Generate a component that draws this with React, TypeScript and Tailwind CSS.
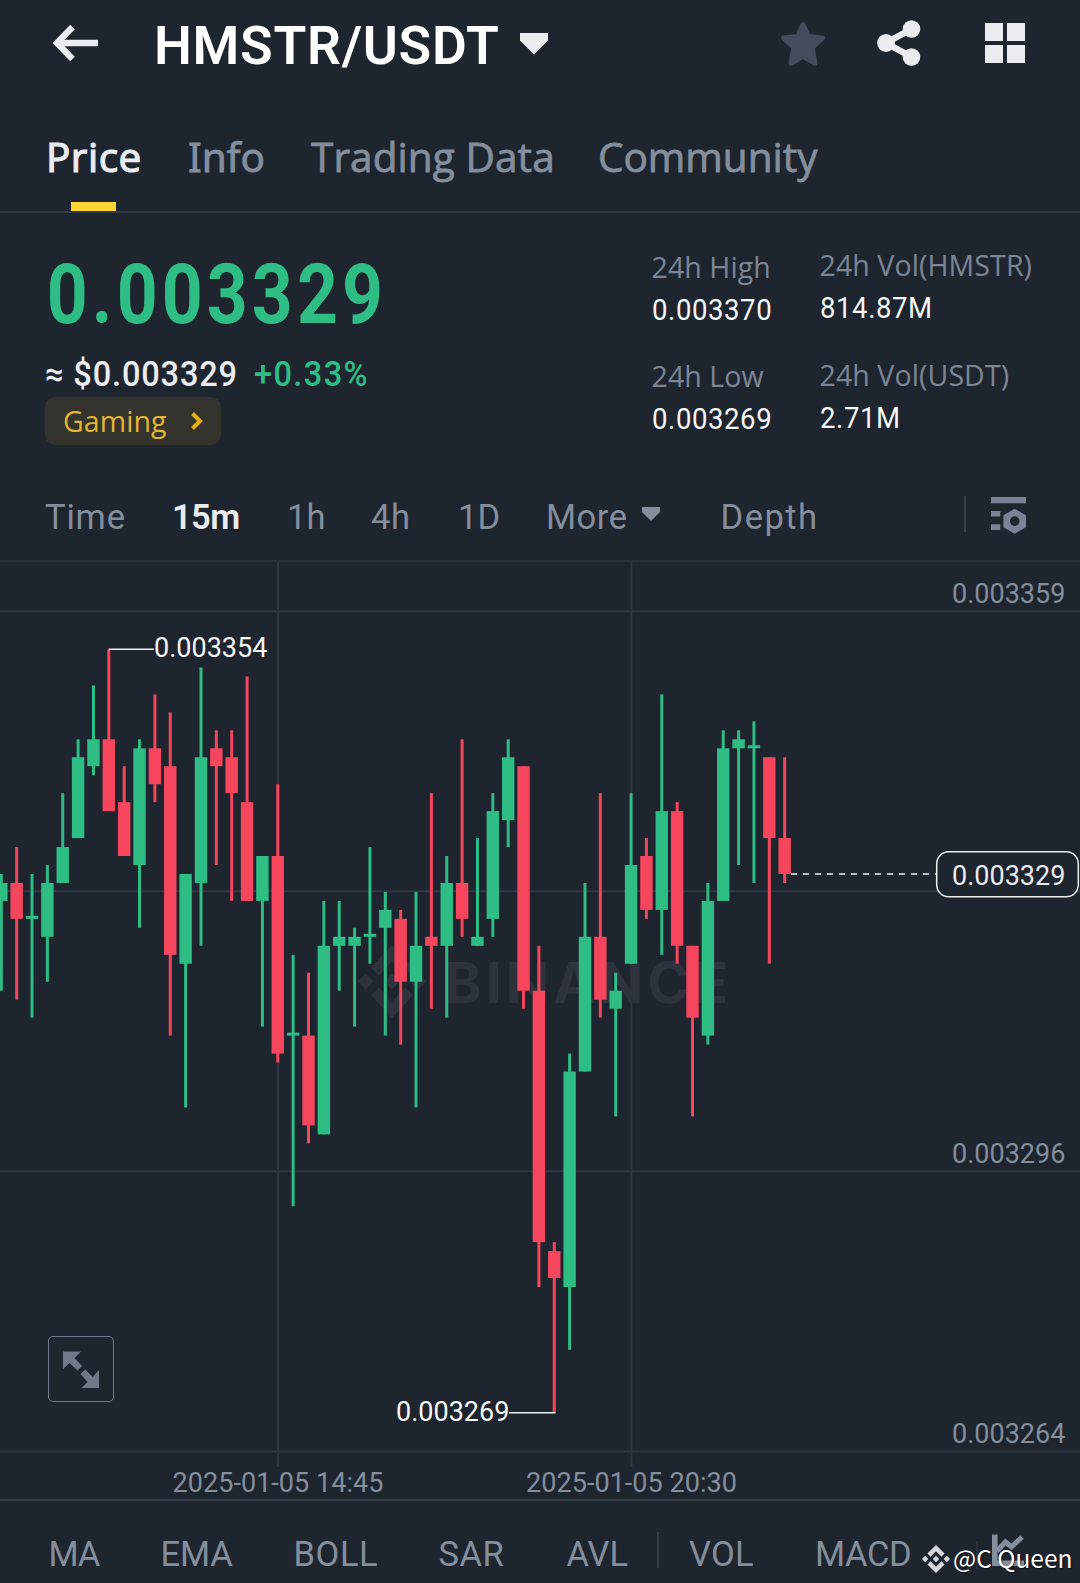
import { FunctionComponent } from "react";

type Candle = {
  up: boolean;
  top: number;
  bottom: number;
  high: number;
  low: number;
};

const HIGH_Y = 649.5;
const TICK = 8.979;
const STEP = 15.36;

// [direction, body top, body bottom, high, low], in price ticks below 0.003354
const rows: [string, number, number, number, number][] = [
  ["u", 26, 28, 25, 38],
  ["d", 26, 30, 22, 39],
  ["u", 30, 30, 25, 41],
  ["u", 26, 32, 24, 37],
  ["u", 22, 26, 16, 26],
  ["u", 12, 21, 10, 21],
  ["u", 10, 13, 4, 14],
  ["d", 10, 18, 0, 18],
  ["d", 17, 23, 13, 23],
  ["u", 11, 24, 10, 31],
  ["d", 11, 15, 5, 17],
  ["d", 13, 34, 7, 43],
  ["u", 25, 35, 25, 51],
  ["u", 12, 26, 2, 33],
  ["d", 11, 13, 9, 24],
  ["d", 12, 16, 9, 28],
  ["d", 17, 28, 3, 28],
  ["u", 23, 28, 23, 42],
  ["d", 23, 45, 15, 46],
  ["u", 43, 43, 34, 62],
  ["d", 43, 53, 36, 55],
  ["u", 33, 54, 28, 54],
  ["u", 32, 33, 28, 38],
  ["u", 32, 33, 31, 42],
  ["u", 32, 32, 22, 35],
  ["u", 29, 31, 27, 43],
  ["d", 30, 37, 29, 44],
  ["u", 33, 37, 27, 51],
  ["d", 32, 33, 16, 40],
  ["u", 26, 33, 23, 41],
  ["d", 26, 30, 10, 32],
  ["u", 32, 33, 21, 33],
  ["u", 18, 30, 16, 32],
  ["u", 12, 19, 10, 22],
  ["d", 13, 38, 13, 40],
  ["d", 38, 66, 33, 71],
  ["d", 67, 70, 66, 85],
  ["u", 47, 71, 45, 78],
  ["u", 32, 47, 26, 47],
  ["d", 32, 39, 16, 41],
  ["u", 38, 40, 36, 52],
  ["u", 24, 35, 16, 35],
  ["d", 23, 29, 21, 30],
  ["u", 18, 29, 5, 34],
  ["d", 18, 33, 17, 35],
  ["d", 33, 41, 33, 52],
  ["u", 28, 43, 26, 44],
  ["u", 11, 28, 9, 28],
  ["u", 10, 11, 9, 24],
  ["u", 11, 11, 8, 26],
  ["d", 12, 21, 12, 35],
  ["d", 21, 25, 12, 26],
];

const candles: Candle[] = rows.map(([dir, top, bottom, high, low]) => ({
  up: dir === "u",
  top,
  bottom,
  high,
  low,
}));

const toY = (tick: number) => HIGH_Y + tick * TICK;

const BinanceMark: FunctionComponent<{ className?: string }> = ({ className }) => (
  <svg viewBox="0 0 126.6 126.6" className={className} fill="currentColor">
    <path d="M38.7 53.2l24.6-24.6 24.6 24.6 14.3-14.3L63.3 0 24.4 38.9zM0 63.3L14.3 49l14.3 14.3-14.3 14.3zM38.7 73.4L63.3 98l24.6-24.6 14.3 14.3-38.9 38.9-38.9-38.9zM98 63.3L112.3 49l14.3 14.3-14.3 14.3z" />
    <path d="M77.8 63.3L63.3 48.8 48.8 63.3l14.5 14.5z" />
  </svg>
);

const Header: FunctionComponent = () => (
  <header className="flex h-[90px] items-start">
    <svg className="ml-[50px] mt-[20px] h-[46px] w-[50px] shrink-0" viewBox="50 20 50 46" fill="none" stroke="#eaecef" strokeWidth="6.4">
      <path d="M98 43H58" />
      <path d="M72.500 27L57 43l15.500 16" />
    </svg>
    <h1 className="ml-[54px] mt-[16px] w-[366px] shrink-0 whitespace-nowrap font-[Roboto] text-[53.5px] font-semibold leading-[60px] tracking-[0.7px] text-white">
      HMSTR/USDT
    </h1>
    <svg className="mt-[33px] h-[22px] w-[28px] shrink-0" viewBox="0 0 28 22" fill="#eaecef">
      <path d="M0 0h28v7.500L14 21.500 0 7.500z" />
    </svg>
    <svg className="ml-[231px] mt-[20px] h-[48px] w-[48px] shrink-0" viewBox="0 0 48 48" fill="#434c5c" stroke="#434c5c" strokeWidth="5" strokeLinejoin="round">
      <path d="M24 4.500l5.400 12 14.100 1.500-10.400 9.700 2.900 15.600L24 36.300l-12 7 2.900-15.600L4.500 18l14.100-1.500z" />
    </svg>
    <svg className="ml-[49px] mt-[20px] h-[46px] w-[45px] shrink-0" viewBox="876 20 45 46" fill="#eaecef">
      <path d="M911.500 29L886 43l25.500 14" fill="none" stroke="#eaecef" strokeWidth="6.500" />
      <circle cx="911.500" cy="29" r="8.800" />
      <circle cx="911.500" cy="57" r="8.800" />
      <circle cx="886" cy="43" r="8.900" />
    </svg>
    <div className="ml-[64px] mt-[23px] grid shrink-0 grid-cols-[18px_18px] grid-rows-[18px_18px] gap-[4px]">
      <div className="bg-[#eaecef]" />
      <div className="bg-[#eaecef]" />
      <div className="bg-[#eaecef]" />
      <div className="bg-[#eaecef]" />
    </div>
  </header>
);

const Tabs: FunctionComponent = () => (
  <nav className="flex h-[123px] border-b-2 border-[#323945] pl-[46px] font-['Open_Sans'] text-[40.5px] leading-[56px] text-[#848e9c] [-webkit-text-stroke:0.8px_currentColor]">
    <div className="flex w-[142px] shrink-0 flex-col pt-[39px] text-[#eaecef]">
      <span className="tracking-[0.5px] [-webkit-text-stroke:1.2px_currentColor]">Price</span>
      <div className="ml-[25px] mt-auto h-[9px] w-[45px] bg-[#fcd535]" />
    </div>
    <span className="w-[123px] shrink-0 pt-[39px] font-['Noto_Sans'] tracking-[-0.1px]">Info</span>
    <span className="w-[287px] shrink-0 whitespace-nowrap pt-[39px] tracking-[0.1px]">Trading Data</span>
    <span className="shrink-0 pt-[39px]">Community</span>
  </nav>
);

const Stat: FunctionComponent<{ label: string; value: string }> = ({ label, value }) => (
  <div className="h-[109.5px] whitespace-nowrap">
    <div className="font-['Open_Sans'] text-[28.5px] leading-[42px] tracking-[0.1px] text-[#7c8594]">{label}</div>
    <div className="origin-left scale-x-[0.95] font-[Roboto] text-[29px] leading-[45px] tracking-[0.6px] text-[#f5f6f8]">{value}</div>
  </div>
);

const Summary: FunctionComponent = () => (
  <section className="flex h-[258px]">
    <div className="w-[605px] shrink-0 pl-[45px]">
      <div className="origin-left scale-x-[0.86] pl-[2px] pt-[33px] font-[Roboto] text-[83px] font-bold leading-[98px] tracking-[4.8px] text-[#2ebd85]">
        0.003329
      </div>
      <div className="mt-[9px] flex font-[Roboto] text-[35px] font-medium leading-[44px]">
        <span className="w-[209px] shrink-0 origin-left scale-x-[0.93] whitespace-nowrap tracking-[0.9px] text-[#eaecef]">
          ≈ $0.003329
        </span>
        <span className="origin-left scale-x-[0.93] tracking-[1.5px] text-[#2ebd85]">+0.33%</span>
      </div>
      <div className="flex h-[48px] w-[176px] items-center rounded-[10px] bg-[#34332d] pl-[18px] font-['Open_Sans'] text-[28.5px] text-[#e2b532]">
        <span className="w-[128px] tracking-[0.1px]">Gaming</span>
        <svg className="h-[18px] w-[12px]" viewBox="0 0 12 18" fill="none" stroke="#e5b110" strokeWidth="4">
          <path d="M1.500 1.500L9 9l-7.500 7.500" />
        </svg>
      </div>
    </div>
    <div className="w-[168px] shrink-0 pl-[46.5px] pt-[32.5px]">
      <Stat label="24h High" value="0.003370" />
      <Stat label="24h Low" value="0.003269" />
    </div>
    <div className="pl-[46.5px] pt-[31px]">
      <Stat label="24h Vol(HMSTR)" value="814.87M" />
      <Stat label="24h Vol(USDT)" value="2.71M" />
    </div>
  </section>
);

const Intervals: FunctionComponent = () => (
  <div className="flex h-[91px] items-start border-b-2 border-[#2a303b] pl-[45px] font-[Roboto] text-[34.5px] leading-[44px] text-[#848e9c]">
    <span className="mt-[24px] w-[127px] shrink-0 tracking-[0.8px]">Time</span>
    <span className="mt-[24px] w-[115px] shrink-0 font-semibold tracking-[-0.6px] text-[#eaecef]">15m</span>
    <span className="mt-[24px] w-[84px] shrink-0">1h</span>
    <span className="mt-[24px] w-[87px] shrink-0 tracking-[0.5px]">4h</span>
    <span className="mt-[24px] w-[88px] shrink-0">1D</span>
    <span className="mt-[24px] w-[96px] shrink-0 tracking-[0.5px]">More</span>
    <svg className="mt-[36px] h-[14px] w-[18px] shrink-0" viewBox="0 0 18 14" fill="#848e9c">
      <path d="M0 0h18v5L9 14 0 5z" />
    </svg>
    <span className="ml-[60.5px] mt-[24px] w-[243.5px] shrink-0 tracking-[1.5px]">Depth</span>
    <div className="mt-[25px] h-[36px] w-[2px] shrink-0 bg-[#3a414d]" />
    <svg className="ml-[25px] mt-[26px] h-[38px] w-[36px] shrink-0" viewBox="991 497 36 38" fill="#7a8395">
      <path d="M991 497h35v6.300h-35zM991 511h9.300v5.600H991zM991 524.300h9.300v5.600H991z" />
      <path fillRule="evenodd" d="M1014.700 508.800l11.300 6.400v12l-11.300 6.500-11.300-6.500v-12zM1014.700 516.300a4.800 4.800 0 1 0 0 9.600 4.800 4.800 0 1 0 0-9.600z" />
    </svg>
  </div>
);

const Chart: FunctionComponent = () => (
  <div className="relative h-[937px]">
    <svg className="block h-[937px] w-[1080px] font-[Roboto] text-[27px]" viewBox="0 562 1080 937">
      <g stroke="#2f3641" strokeWidth="2">
        <path d="M0 611.300H1080M0 891.300H1080M0 1171.300H1080M0 1451.500H1080" />
        <path d="M278 562V1467M631.300 562V1467" />
      </g>

      <g fill="#2d323d">
        <svg x="358" y="945" width="68" height="73" viewBox="0 0 126.6 126.6" preserveAspectRatio="none">
          <path d="M38.7 53.2l24.6-24.6 24.6 24.6 14.3-14.3L63.3 0 24.4 38.9zM0 63.3L14.3 49l14.3 14.3-14.3 14.3zM38.7 73.4L63.3 98l24.6-24.6 14.3 14.3-38.9 38.9-38.9-38.9zM98 63.3L112.3 49l14.3 14.3-14.3 14.3zM77.8 63.3L63.3 48.8 48.8 63.3l14.5 14.5z" />
        </svg>
        <text x="444" y="1002.500" textLength="284" className="font-[Inter] text-[57px] font-bold">
          BINANCE
        </text>
      </g>

      {candles.map((c, i) => {
        const x = 1.3 + i * STEP;
        const top = c.top === c.bottom ? toY(c.top) - 3 : toY(c.top);
        return (
          <g key={i} fill={c.up ? "#2ebd85" : "#f6465d"}>
            <rect x={x - 1.5} y={toY(c.high)} width="3" height={toY(c.low) - toY(c.high)} />
            <rect x={x - 6.2} y={top} width="12.4" height={toY(c.bottom) - top} />
          </g>
        );
      })}

      <path d="M108.700 649.300H154M509 1412.800H555.500" stroke="#eaecef" strokeWidth="1.500" />
      <g fill="#f5f6f8">
        <text x="154" y="656.500">0.003354</text>
        <text x="396" y="1420.500">0.003269</text>
      </g>

      <g fill="#848e9c">
        <text x="952" y="602.500">0.003359</text>
        <text x="952" y="1162.500">0.003296</text>
        <text x="952" y="1442.500">0.003264</text>
        <text x="172.500" y="1491.500" textLength="211">2025-01-05 14:45</text>
        <text x="526" y="1491.500" textLength="211">2025-01-05 20:30</text>
      </g>

      <path d="M791 874H936" stroke="#eaecef" strokeWidth="1.600" strokeDasharray="6 6" />
      <rect x="936.700" y="851.700" width="141.600" height="45" rx="12" fill="#1f252f" stroke="#eaecef" strokeWidth="1.500" />
      <text x="952" y="884.800" fill="#eaecef">0.003329</text>
    </svg>

    <button className="absolute left-[48px] top-[774px] h-[66px] w-[66px] rounded-[5px] border-[1.5px] border-[#707989]">
      <svg className="absolute left-[13px] top-[14px] h-[38px] w-[38px]" viewBox="62 1351 38 38" fill="#707989">
        <path d="M63 1351.500h18l-6.500 6.500 7.500 8-4.500 4.500-8-7.500-6.500 6z" />
        <path d="M99 1388H81.500l6-6-7-8 4.700-4.500 7.500 7.500 6.300-7z" />
      </svg>
    </button>
  </div>
);

const Indicators: FunctionComponent = () => (
  <footer className="flex h-[84px] items-start border-t-2 border-[#353c48] pl-[48.5px] font-[Roboto] text-[34.5px] leading-[44px] text-[#848e9c]">
    <span className="mt-[31px] w-[112px] shrink-0 tracking-[-1.2px]">MA</span>
    <span className="mt-[31px] w-[133px] shrink-0 tracking-[-0.2px]">EMA</span>
    <span className="mt-[31px] w-[145px] shrink-0 tracking-[0.6px]">BOLL</span>
    <span className="mt-[31px] w-[128px] shrink-0 tracking-[0.5px]">SAR</span>
    <span className="mt-[31px] w-[90.5px] shrink-0">AVL</span>
    <div className="mt-[31px] h-[36px] w-[2px] shrink-0 bg-[#353c48]" />
    <span className="ml-[30px] mt-[31px] w-[126px] shrink-0 tracking-[0.3px]">VOL</span>
    <span className="mt-[31px] w-[161px] shrink-0 tracking-[-0.4px]">MACD</span>
    <div className="mt-[40px] h-[28px] w-[2px] shrink-0 bg-[#2c333e]" />
    <svg className="ml-[14px] mt-[32px] h-[34px] w-[34px] shrink-0" viewBox="0 0 34 34" fill="none" stroke="#848e9c">
      <path d="M2.800 1.500V33M0 30.300H32" strokeWidth="5.600" />
      <path d="M5 18l8.500-9 6 5L30 4" strokeWidth="5" />
    </svg>
  </footer>
);

const App: FunctionComponent = () => {
  return (
    <div className="relative h-[1583px] w-[1080px] overflow-hidden bg-[#1f252f]">
      <Header />
      <Tabs />
      <Summary />
      <Intervals />
      <Chart />
      <Indicators />
      <div className="absolute left-[922px] top-[1541px] flex h-[36px] items-center whitespace-nowrap text-white">
        <BinanceMark className="h-[28px] w-[28px] text-[#d5d7da]" />
        <span className="relative -top-px ml-[3px] font-['Noto_Sans_CJK_SC',sans-serif] text-[24.5px] leading-[36px] [text-shadow:1px_1px_2px_rgba(0,0,0,0.6)]">
          @C Queen
        </span>
      </div>
    </div>
  );
};

export default App;
